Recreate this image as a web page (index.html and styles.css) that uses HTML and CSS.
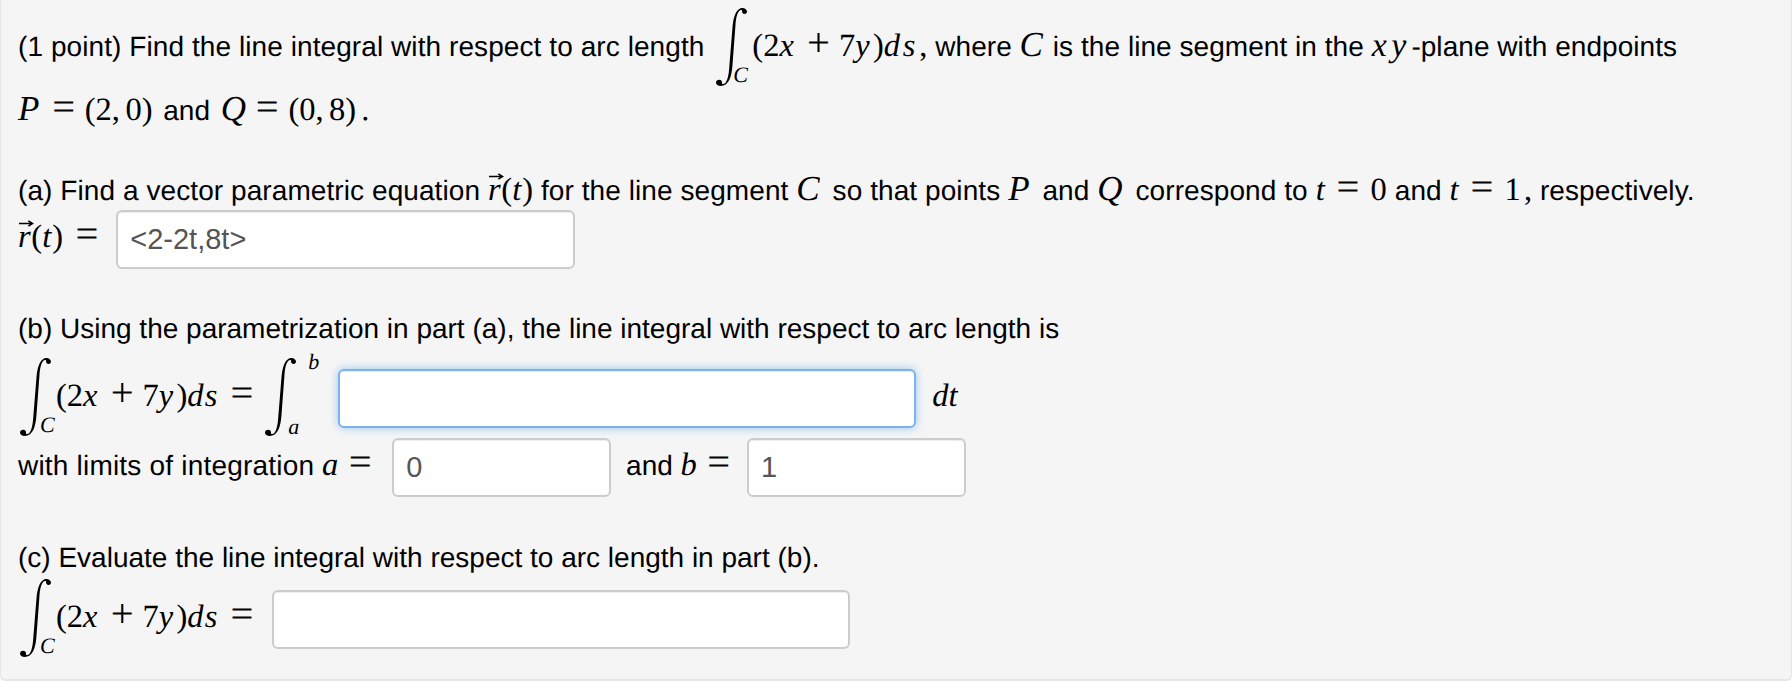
FILE: index.html
```html
<!DOCTYPE html>
<html lang="en">
<head>
<meta charset="utf-8">
<title>Line integral problem</title>
<link rel="stylesheet" href="styles.css">
</head>
<body>
<svg class="defs" width="0" height="0" aria-hidden="true">
  <symbol id="int" viewBox="0 0 36 78" preserveAspectRatio="none">
    <path d="M35 3.8C35 1.8 33 0 30.6 0 24.5 0 21.6 8 20.6 18L17.2 60C16.6 68 15 76 11 76 10.2 76 9.9 75.6 10 75 10.3 73.4 9.2 71.8 7.2 71.8 5.3 71.8 4 73.1 4 74.8 4 76.8 6.2 78 8.6 78 16.5 78 19.6 69 20.4 58L23.4 18C24 8 26 2 29.4 2 30 2 30.2 2.4 30.1 3 29.8 4.6 30.9 6 32.6 6 34 6 35 5 35 3.8Z" fill="#000"/>
  </symbol>
  <symbol id="arrow" viewBox="0 0 16 7">
    <path d="M0 3.5h13M10 .6l4.5 2.9L10 6.4" fill="none" stroke="#000" stroke-width="1.6"/>
  </symbol>
</svg>
<main class="panel">
  <p class="row r1"><span class="sp1">(1 point) Find the line integral with respect to arc length</span> <span class="intg i1"><svg class="int"><use href="#int"/></svg><i class="sub">C</i></span><span class="m">(2<i class="x">x</i><span class="op bin">+</span>7<i class="y">y</i>)<i class="d dw">d</i><i class="s sw">s</i>,</span> where <i class="m big">C</i> is the line segment in the <span class="m wide"><i class="wx">x</i><i>y</i></span>-plane with endpoints</p>
  <p class="row r2"><i class="m big">P</i><span class="m"><span class="op rel">=</span>(2,<span class="thin"></span>0)</span> and <i class="m big q">Q</i><span class="m"><span class="op rel">=</span>(0,<span class="thin"></span>8)<span class="dot">.</span></span></p>
  <p class="row r3">(a) Find a vector parametric equation <span class="m"><span class="vec"><svg class="arrow"><use href="#arrow"/></svg><i class="r">r</i></span>(<i class="t">t</i>)</span> for the line segment <i class="m big">C</i> so that points <i class="m big">P</i> and <i class="m big">Q</i> correspond to <span class="m"><i class="t">t</i><span class="op rel">=</span>0</span> and <span class="m"><i class="t">t</i><span class="op rel">=</span>1<span class="cm">,</span></span> respectively.</p>
  <p class="row r4"><span class="m"><span class="vec"><svg class="arrow"><use href="#arrow"/></svg><i class="r">r</i></span>(<i class="t">t</i>)<span class="op rel">=</span></span><input class="field w-a" type="text" value="&lt;2-2t,8t&gt;" aria-label="r of t"></p>
  <p class="row r5">(b) Using the parametrization in part (a), the line integral with respect to arc length is</p>
  <p class="row r6"><span class="intg i2"><svg class="int"><use href="#int"/></svg><i class="sub">C</i></span><span class="m">(2<i class="x">x</i><span class="op bin">+</span>7<i class="y">y</i>)<i class="d">d</i><i class="s">s</i><span class="op rel">=</span></span><span class="intg i3"><svg class="int"><use href="#int"/></svg><i class="upper">b</i><i class="lower">a</i></span><input class="field w-b focus" type="text" aria-label="integrand"><i class="m dt">dt</i></p>
  <p class="row r7"><span class="sp2">with limits of integration</span> <span class="m"><i class="a">a</i><span class="op rel">=</span></span><input class="field w-c" type="text" value="0" aria-label="a"> and <span class="m"><i class="a">b</i><span class="op rel">=</span></span><input class="field w-e" type="text" value="1" aria-label="b"></p>
  <p class="row r8">(c) Evaluate the line integral with respect to arc length in part (b).</p>
  <p class="row r9"><span class="intg i2"><svg class="int"><use href="#int"/></svg><i class="sub">C</i></span><span class="m">(2<i class="x">x</i><span class="op bin">+</span>7<i class="y">y</i>)<i class="d">d</i><i class="s">s</i><span class="op rel">=</span></span><input class="field w-d" type="text" aria-label="value"></p>
</main>
</body>
</html>
```
FILE: styles.css
```css
* { box-sizing: border-box; }
html, body { margin: 0; background: #fff; }
.defs { position: absolute; }
.panel {
  height: 681px;
  background: #f5f5f5;
  border: solid #e6e6e6;
  border-width: 0 1px 2px;
  border-radius: 0 0 5px 5px;
  padding-left: 17px;
  font: 28px "Liberation Sans", Arial, sans-serif;
  text-rendering: geometricPrecision;
  color: #000;
  overflow: hidden;
}
.row { margin: 0; white-space: nowrap; }
.r1 { height: 94px; line-height: 90px; letter-spacing: .05px; }
.r2 { height: 32px; line-height: 30px; word-spacing: 3px; }
.r3 { height: 32px; line-height: 29px; margin-top: 48px; letter-spacing: .08px; }
.r4 { height: 59px; line-height: 59px; margin-top: 2px; }
.r5 { height: 32px; line-height: 32px; margin-top: 46px; }
.r6 { height: 59px; line-height: 59px; margin-top: 22px; }
.r7 { height: 59px; line-height: 59px; margin-top: 10px; }
.r8 { height: 32px; line-height: 32px; margin-top: 47px; }
.r9 { height: 59px; line-height: 59px; margin-top: 14px; }
.sp1 { letter-spacing: .08px; }
.sp2 { letter-spacing: .2px; }

.m { font-family: "Liberation Serif", "Times New Roman", serif; font-size: 32.5px; }
.big { font-size: 35px; padding-right: 5px; }
.r1 .big { padding-right: 2px; }
.r2 .big { padding-right: 3px; }
.r2 .q { padding-right: 0; }
.wide { font-size: 34px; margin-right: 5px; }
.wx { letter-spacing: .13em; }
.x { letter-spacing: .13em; }
.y { letter-spacing: .1em; }
.s { letter-spacing: .1em; }
.d { letter-spacing: .04em; }
.dw { letter-spacing: .08em; }
.sw { letter-spacing: .12em; }
.t { letter-spacing: .03em; }
.r { letter-spacing: .02em; }
.a { letter-spacing: .02em; }
.op { font-size: 1.25em; line-height: 0; font-family: "Liberation Serif", serif; }
.bin { margin: 0 .22em; }
.rel { margin: 0 .24em; }
.r3 .rel { margin: 0 .27em; }
.r4 .rel { margin: 0 .24em 0 .31em; }
.thin { display: inline-block; width: .167em; }
.dot { margin-left: 5px; }
.cm { margin-left: 3px; }

.field {
  height: 59px;
  vertical-align: middle;
  background: #fff;
  border: 2px solid #ccc;
  border-radius: 6px;
  padding: 0 12px;
  color: #555;
  font: 29px "Liberation Sans", Arial, sans-serif;
  outline: none;
  box-shadow: inset 0 1px 1px rgba(0,0,0,.075);
}
.focus { border-color: #7fb2ea; box-shadow: inset 0 1px 1px rgba(0,0,0,.075), 0 0 8px rgba(82,168,236,.6); }
.w-a { width: 459px; margin-left: 8px; }
.w-b { width: 578px; margin-left: 41px; }
.w-c { width: 219px; margin-left: 11px; margin-right: 7px; }
.w-e { width: 219px; margin-left: 7px; }
.w-d { width: 578px; margin-left: 9px; }

.intg { display: inline-block; position: relative; height: 0; vertical-align: baseline; }
.int { position: absolute; width: 36px; height: 78px; left: -3px; top: -48px; }
.i1 { width: 37px; margin-left: 3px; }
.i2 { width: 37px; margin-left: 1px; }
.i3 { width: 33px; margin-left: 1px; }
.sub, .upper, .lower {
  position: absolute;
  font-family: "Liberation Serif", serif;
  font-size: 22px;
  line-height: 1;
}
.sub { left: 21px; top: 8px; }
.i1 .sub { left: 18px; }
.upper { left: 44px; top: -55px; }
.lower { left: 24px; top: 10px; }
.dt { margin-left: 16px; }
.vec { position: relative; }
.arrow { position: absolute; left: 1px; top: 1px; width: 15px; height: 7px; }
```
